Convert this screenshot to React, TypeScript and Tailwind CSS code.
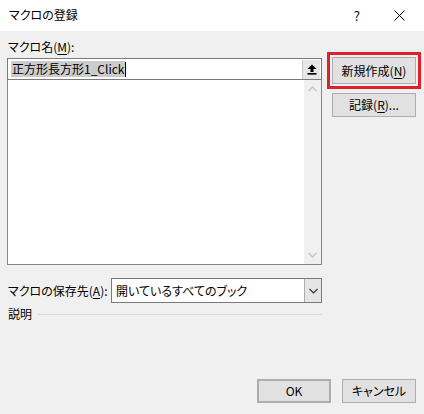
import React from 'react'

const font = "font-['Noto_Sans_CJK_JP','Noto_Sans',sans-serif] [font-feature-settings:'palt']"

function UpArrowIcon() {
  return (
    <svg width="10" height="11" viewBox="0 0 10 11">
      <path d="M5 0.5 L9.5 5 L6.5 5 L6.5 8 L3.5 8 L3.5 5 L0.5 5 Z" fill="#000" />
      <rect x="0.5" y="9" width="9" height="1.6" fill="#000" />
    </svg>
  )
}

function Chevron({ up, color }: { up?: boolean; color: string }) {
  return (
    <svg width="9" height="6" viewBox="0 0 9 6">
      <path
        d={up ? 'M0.5 5 L4.5 1 L8.5 5' : 'M0.5 1 L4.5 5 L8.5 1'}
        fill="none"
        stroke={color}
        strokeWidth="1.2"
      />
    </svg>
  )
}

function Button({
  children,
  className = '',
}: {
  children: React.ReactNode
  className?: string
}) {
  return (
    <div
      className={`flex items-center justify-center bg-[#e1e1e1] border border-[#adadad] text-[12px] text-black ${className}`}
    >
      {children}
    </div>
  )
}

export default function App() {
  return (
    <div className={`w-[424px] h-[414px] bg-[#f0f0f0] flex flex-col overflow-hidden text-black ${font}`}>
      {/* title bar */}
      <div className="h-[31px] bg-white flex items-center shrink-0">
        <span className="ml-[9px] -mt-px text-[12px] leading-none">マクロの登録</span>
        <span className="ml-auto mr-[34px] -mt-px text-[13px] leading-none">?</span>
        <svg width="11" height="11" viewBox="0 0 11 11" className="mr-[19px] -mt-px">
          <path d="M0.5 0.5 L10.5 10.5 M10.5 0.5 L0.5 10.5" stroke="#000" strokeWidth="1" />
        </svg>
      </div>

      <div className="flex flex-1">
        {/* left column */}
        <div className="ml-[7px] w-[315px] flex flex-col">
          <div className="mt-[8px] h-[19px] pl-[1px] text-[12px] leading-[16px]">
            マクロ名(<span className="underline underline-offset-2">M</span>):
          </div>
          <div className="h-[22px] bg-white border border-[#7a7a7a] flex items-center">
            <span className="ml-[3px] bg-[#cccccc] text-[12px] leading-[16px] px-[1px]">
              正方形長方形1_Click
            </span>
            <span className="w-px h-[15px] bg-black" />
            <div className="ml-auto w-[18px] h-[19px] mr-px bg-[#e6e6e6] border-l border-[#c8c8c8] flex items-center justify-center">
              <UpArrowIcon />
            </div>
          </div>
          <div className="h-[185px] bg-white border border-t-0 border-[#828790] flex">
            <div className="ml-auto w-[17px] bg-[#f0f0f0] flex flex-col items-center justify-between py-[6px]">
              <Chevron up color="#c2c2c2" />
              <Chevron color="#c2c2c2" />
            </div>
          </div>

          <div className="mt-[13px] flex items-center h-[25px]">
            <span className="ml-px w-[103px] text-[12px] leading-none">
              マクロの保存先(<span className="underline underline-offset-2">A</span>):
            </span>
            <div className="flex-1 h-[25px] bg-white border border-[#7a7a7a] flex items-center">
              <span className="ml-[4px] text-[12px] leading-none">開いているすべてのブック</span>
              <div className="ml-auto w-[17px] h-[23px] bg-[#e5e5e5] border-l border-[#adadad] flex items-center justify-center">
                <Chevron color="#333" />
              </div>
            </div>
          </div>

          <div className="mt-[1px] flex items-center h-[20px]">
            <span className="ml-px text-[12px] leading-none">説明</span>
            <div className="ml-[6px] flex-1 h-px bg-[#dcdcdc]" />
          </div>
        </div>

        {/* right column */}
        <div className="ml-[5px] w-[94px] flex flex-col mt-[21px]">
          <div className="h-[37px] border-[3px] border-[#e0202a] p-[2px]">
            <Button className="h-full">
              新規作成(<span className="underline underline-offset-2">N</span>)
            </Button>
          </div>
          <Button className="mt-[4px] mx-[5px] h-[24px]">
            記録(<span className="underline underline-offset-2">R</span>)...
          </Button>
        </div>
      </div>

      {/* bottom buttons */}
      <div className="flex justify-end gap-[11px] pr-[8px] pb-[11px]">
        <Button className="w-[74px] h-[24px] border-2 border-[#0078d7]">OK</Button>
        <Button className="w-[74px] h-[24px]">キャンセル</Button>
      </div>
    </div>
  )
}
